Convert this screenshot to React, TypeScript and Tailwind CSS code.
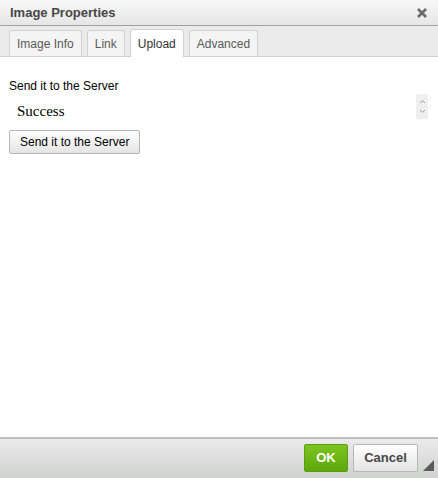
import React from "react";

export default function App() {
  const font = { fontFamily: '"Liberation Sans", Arial, sans-serif' };
  return (
    <div className="w-[438px] h-[478px] flex flex-col bg-white overflow-hidden text-[#333]" style={font}>
      {/* Title bar */}
      <div className="h-[26px] shrink-0 flex items-center justify-between pl-[10px] pr-[8px] bg-gradient-to-b from-[#f8f8f8] to-[#e6e6e6] border-b border-[#a0a0a0]">
        <span className="text-[13px] font-bold text-[#474747]">Image Properties</span>
        <svg width="12" height="12" viewBox="0 0 12 12" className="mr-[2px]">
          <path d="M2 2 L10 10 M10 2 L2 10" stroke="#6a6a6a" strokeWidth="2.6" strokeLinecap="butt" />
        </svg>
      </div>
      {/* Tabs */}
      <div className="h-[31px] shrink-0 flex items-end gap-[5px] pl-[9px] bg-[#ebebeb] border-b border-[#d1d1d1]">
        {["Image Info", "Link", "Upload", "Advanced"].map((t) => {
          const active = t === "Upload";
          return (
            <div
              key={t}
              className={
                active
                  ? "h-[28px] -mb-px px-[7px] flex items-center bg-white border border-b-0 border-[#d1d1d1] rounded-t-[3px] text-[12px] text-[#333]"
                  : "h-[26px] px-[7px] flex items-center bg-[#f4f4f4] border border-b-0 border-[#d1d1d1] rounded-t-[3px] text-[12px] text-[#595959]"
              }
            >
              {t}
            </div>
          );
        })}
      </div>
      {/* Body */}
      <div className="flex-1 flex flex-col px-[9px] pt-[22px]">
        <div className="text-[12px] text-[#000] leading-[15px]">Send it to the Server</div>
        <div className="h-[26px] flex items-start justify-between">
          <div className="pl-[8px] pt-[9px] text-[15px] leading-[17px] text-[#000]" style={{ fontFamily: '"Liberation Serif", "Times New Roman", serif' }}>
            Success
          </div>
          <div className="w-[12px] h-[25px] bg-[#efefef] mr-[1px] flex flex-col items-center justify-around py-[2px]">
            <svg width="7" height="5" viewBox="0 0 7 5">
              <path d="M1 4 L3.5 1.5 L6 4" stroke="#9a9a9a" strokeWidth="1" fill="none" />
            </svg>
            <svg width="7" height="5" viewBox="0 0 7 5">
              <path d="M1 1 L3.5 3.5 L6 1" stroke="#9a9a9a" strokeWidth="1" fill="none" />
            </svg>
          </div>
        </div>
        <div className="mt-[9px]">
          <button className="h-[24px] px-[10px] text-[12px] text-[#000] bg-gradient-to-b from-[#ffffff] to-[#e4e4e4] border border-[#b6b6b6] rounded-[2px]">
            Send it to the Server
          </button>
        </div>
      </div>
      {/* Footer */}
      <div className="h-[41px] shrink-0 border-t-2 border-[#bfbfbf] bg-gradient-to-b from-[#ebebeb] to-[#cfd1cf] flex items-start justify-end pt-[5px] pr-[20px] gap-[5px] relative">
        <button className="h-[28px] w-[44px] text-[13px] font-bold text-white bg-gradient-to-b from-[#7dc51e] to-[#5ca70b] border border-[#5a9e14] rounded-[2px]">
          OK
        </button>
        <button className="h-[28px] w-[65px] text-[13px] font-bold text-[#474747] bg-gradient-to-b from-[#ffffff] to-[#e4e4e4] border border-[#b6b6b6] rounded-[2px]">
          Cancel
        </button>
        <svg width="11" height="11" viewBox="0 0 11 11" className="absolute right-[4px] bottom-[7px]">
          <path d="M11 0 L11 11 L0 11 Z" fill="#5a5a5a" />
        </svg>
      </div>
    </div>
  );
}
